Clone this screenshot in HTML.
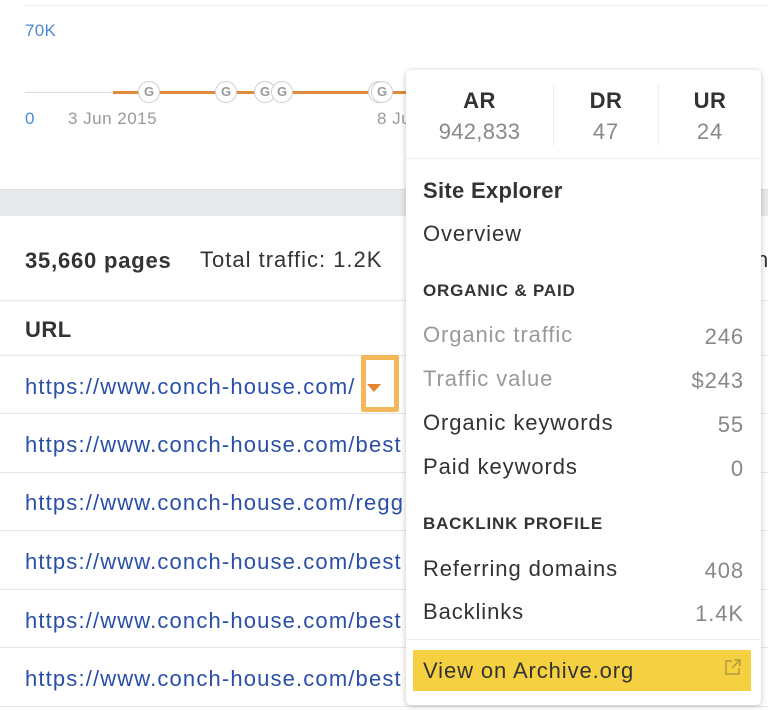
<!DOCTYPE html>
<html><head><meta charset="utf-8"><style>
*{margin:0;padding:0;box-sizing:border-box}
body{width:768px;height:710px;overflow:hidden;background:#fff;font-family:"Liberation Sans",Arial,sans-serif;position:relative}
.a{position:absolute;white-space:nowrap}
.url{color:#2a4fa8;font-size:22px;letter-spacing:1.15px;left:25px}
.sep{position:absolute;left:0;width:768px;height:1px;background:#e6e6e6}
.g{position:absolute;width:22px;height:22px;border-radius:50%;border:1.5px solid #ccc;background:#fff;color:#999;font-size:13px;font-weight:bold;text-align:center;line-height:19px}
.pop{position:absolute;left:406px;top:70px;width:355px;height:635px;background:#fff;border-radius:5px;box-shadow:0 1px 6px rgba(0,0,0,.25)}
.pop .a{font-size:22px;letter-spacing:0.9px;color:#333}
.lbl{left:17px}
.val{right:17px;color:#888!important}
.hd{font-size:17px!important;letter-spacing:0.8px!important;font-weight:bold;left:17px}
</style></head><body>
<div class="sep" style="top:5px;left:25px;background:#eee"></div>
<div class="a" style="left:25px;top:21px;font-size:17px;letter-spacing:0.3px;color:#4a8ad8">70K</div>
<div class="sep" style="top:92px;left:25px;width:100px;background:#ddd"></div>
<div class="a" style="left:113px;top:91px;width:300px;height:3px;background:#e08a3c"></div>
<div class="g" style="left:138px;top:81px">G</div>
<div class="g" style="left:215px;top:81px">G</div>
<div class="g" style="left:254px;top:81px">G</div>
<div class="g" style="left:271px;top:81px">G</div>
<div class="g" style="left:368px;top:81px">G</div>
<div class="g" style="left:371px;top:81px">G</div>
<div class="a" style="left:25px;top:109px;font-size:17px;color:#4a8ad8">0</div>
<div class="a" style="left:68px;top:109px;font-size:17px;letter-spacing:0.5px;color:#999">3 Jun 2015</div>
<div class="a" style="left:377px;top:109px;font-size:17px;letter-spacing:0.5px;color:#999">8 Ju</div>
<div class="a" style="left:0;top:189px;width:768px;height:27px;background:#e8e9ea;border-top:1px solid #ddd"></div>
<div class="a" style="left:25px;top:248px;font-size:22px;letter-spacing:0.8px;font-weight:bold;color:#333">35,660 pages</div>
<div class="a" style="left:200px;top:247px;font-size:22px;letter-spacing:1px;color:#333">Total traffic: 1.2K</div>
<div class="a" style="left:756px;top:247px;font-size:22px;color:#333">n</div>
<div class="sep" style="top:300px"></div>
<div class="a" style="left:25px;top:317px;font-size:22px;letter-spacing:0.5px;font-weight:bold;color:#333">URL</div>
<div class="sep" style="top:355px"></div>
<div class="a url" style="top:374px">https://www.conch-house.com/</div>
<div class="a" style="left:361px;top:355px;width:38px;height:57px;border:5px solid #f2b85a;border-radius:2px;background:#fff"></div>
<div class="a" style="left:367px;top:384px;width:0;height:0;border-left:7px solid transparent;border-right:7px solid transparent;border-top:8px solid #e8832d"></div>
<div class="sep" style="top:413px"></div>
<div class="a url" style="top:432px">https://www.conch-house.com/best</div>
<div class="sep" style="top:472px"></div>
<div class="a url" style="top:490px">https://www.conch-house.com/regg</div>
<div class="sep" style="top:530px"></div>
<div class="a url" style="top:549px">https://www.conch-house.com/best</div>
<div class="sep" style="top:589px"></div>
<div class="a url" style="top:608px">https://www.conch-house.com/best</div>
<div class="sep" style="top:647px"></div>
<div class="a url" style="top:666px">https://www.conch-house.com/best</div>
<div class="sep" style="top:706px"></div>

<div class="pop">
 <div class="a" style="left:0;width:147px;text-align:center;top:18px;font-weight:bold;letter-spacing:0.5px">AR</div>
 <div class="a val" style="left:0;right:auto;width:147px;text-align:center;top:49px;letter-spacing:0.3px">942,833</div>
 <div class="a" style="left:147px;top:14px;width:1px;height:62px;background:#eee"></div>
 <div class="a" style="left:148px;width:104px;text-align:center;top:18px;font-weight:bold;letter-spacing:0.5px">DR</div>
 <div class="a val" style="left:148px;right:auto;width:104px;text-align:center;top:49px">47</div>
 <div class="a" style="left:252px;top:14px;width:1px;height:62px;background:#eee"></div>
 <div class="a" style="left:253px;width:102px;text-align:center;top:18px;font-weight:bold;letter-spacing:0.5px">UR</div>
 <div class="a val" style="left:253px;right:auto;width:102px;text-align:center;top:49px">24</div>
 <div class="a" style="left:0;top:88px;width:355px;height:1px;background:#eee"></div>
 <div class="a lbl" style="top:108px;font-weight:bold;letter-spacing:0.3px!important">Site Explorer</div>
 <div class="a lbl" style="top:151px">Overview</div>
 <div class="a hd" style="top:211px">ORGANIC &amp; PAID</div>
 <div class="a lbl" style="top:252px;color:#999">Organic traffic</div><div class="a val" style="top:254px">246</div>
 <div class="a lbl" style="top:296px;color:#999">Traffic value</div><div class="a val" style="top:298px">$243</div>
 <div class="a lbl" style="top:340px">Organic keywords</div><div class="a val" style="top:342px">55</div>
 <div class="a lbl" style="top:384px">Paid keywords</div><div class="a val" style="top:386px">0</div>
 <div class="a hd" style="top:444px">BACKLINK PROFILE</div>
 <div class="a lbl" style="top:486px">Referring domains</div><div class="a val" style="top:488px">408</div>
 <div class="a lbl" style="top:529px">Backlinks</div><div class="a val" style="top:531px">1.4K</div>
 <div class="a" style="left:0;top:569px;width:355px;height:1px;background:#eee"></div>
 <div class="a" style="left:7px;top:580px;width:338px;height:41px;background:#f5d142"></div>
 <div class="a lbl" style="top:588px;color:#333">View on Archive.org</div>
 <svg class="a" style="left:318px;top:588px" width="18" height="18" viewBox="0 0 18 18" fill="none" stroke="#b39a3a" stroke-width="1.5"><path d="M8 3H2v13h13v-6M10 2h6v6M16 2l-8 8"/></svg>
</div>
</body></html>
